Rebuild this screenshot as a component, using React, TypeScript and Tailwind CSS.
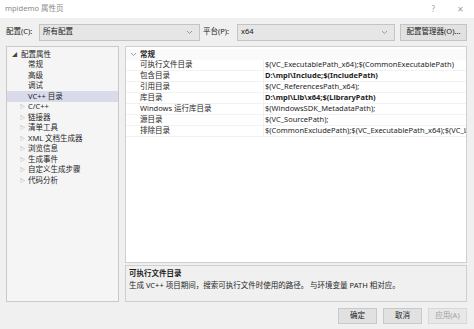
import React from "react";

const font = {
  fontFamily: '"Noto Sans", "Noto Sans CJK SC", sans-serif',
};

const tree = [
  { label: "常规", indent: true },
  { label: "高级", indent: true },
  { label: "调试", indent: true },
  { label: "VC++ 目录", indent: true, selected: true },
  { label: "C/C++" },
  { label: "链接器" },
  { label: "清单工具" },
  { label: "XML 文档生成器" },
  { label: "浏览信息" },
  { label: "生成事件" },
  { label: "自定义生成步骤" },
  { label: "代码分析" },
];

const rows = [
  { name: "可执行文件目录", value: "$(VC_ExecutablePath_x64);$(CommonExecutablePath)" },
  { name: "包含目录", value: "D:\\mpi\\Include;$(IncludePath)", bold: true },
  { name: "引用目录", value: "$(VC_ReferencesPath_x64);" },
  { name: "库目录", value: "D:\\mpi\\Lib\\x64;$(LibraryPath)", bold: true },
  { name: "Windows 运行库目录", value: "$(WindowsSDK_MetadataPath);" },
  { name: "源目录", value: "$(VC_SourcePath);" },
  { name: "排除目录", value: "$(CommonExcludePath);$(VC_ExecutablePath_x64);$(VC_LibraryPath_x64)" },
];

function Chevron() {
  return (
    <svg width="7" height="5" viewBox="0 0 7 5" className="shrink-0">
      <path d="M1 1 L3.5 3.5 L6 1" fill="none" stroke="#9a9a9a" strokeWidth="1" />
    </svg>
  );
}

function Select({ text, width }: { text: string; width: string }) {
  return (
    <div
      className={`${width} h-[17px] shrink-0 flex items-center justify-between border border-[#c4c4c4] bg-[#e6e6e6] pl-[3px] pr-[6px] text-[7.5px] text-[#1a1a1a]`}
    >
      <span>{text}</span>
      <Chevron />
    </div>
  );
}

function Btn({ text, disabled }: { text: string; disabled?: boolean }) {
  return (
    <div
      className={`w-[39px] h-[16px] flex items-center justify-center border text-[7.5px] ${
        disabled
          ? "border-[#d8d8d8] bg-[#e8e8e8] text-[#a0a0a0]"
          : "border-[#c8c8c8] bg-[#e1e1e1] text-[#1a1a1a]"
      }`}
    >
      {text}
    </div>
  );
}

export default function App() {
  return (
    <div className="w-[474px] h-[329px] bg-[#f0f0f0] overflow-hidden flex flex-col" style={font}>
      {/* title bar */}
      <div className="h-[18px] shrink-0 bg-white flex items-center justify-between pl-[5px] pr-[10px] text-[7.5px] text-[#8a8a8a]">
        <span>mpidemo 属性页</span>
        <div className="flex items-center gap-[22px] text-[8px] text-[#a0a0a0]">
          <span>?</span>
          <span>✕</span>
        </div>
      </div>

      {/* toolbar */}
      <div className="h-[28px] shrink-0 flex items-center pl-[6px] pr-[7px] text-[7.5px] text-[#1a1a1a]">
        <span className="w-[33px] shrink-0">配置(C):</span>
        <Select text="所有配置" width="w-[161px]" />
        <span className="ml-[3px] w-[34px] shrink-0">平台(P):</span>
        <Select text="x64" width="w-[158px]" />
        <div className="ml-[5px] w-[67px] h-[17px] shrink-0 flex items-center justify-center border border-[#c4c4c4] bg-[#e1e1e1]">
          配置管理器(O)...
        </div>
      </div>

      {/* main */}
      <div className="h-[256px] shrink-0 flex pl-[6px] pr-[7px] gap-[6px]">
        {/* tree */}
        <div className="w-[113px] shrink-0 h-[256px] border border-[#c9c9c9] bg-[#f5f5f5] pt-[2px] text-[7.5px] text-[#1e1e1e] whitespace-nowrap">
          <div className="h-[10.5px] flex items-center pl-[5px]">
            <span className="text-[5px] text-[#444] w-[9px]">◢</span>
            <span>配置属性</span>
          </div>
          {tree.map((t) => (
            <div
              key={t.label}
              className={`h-[10.5px] flex items-center ${t.selected ? "bg-[#d9dbea]" : ""} ${
                t.indent ? "pl-[21px]" : "pl-[13px]"
              }`}
            >
              {!t.indent && <span className="text-[5px] text-[#777] w-[8px]">▷</span>}
              <span>{t.label}</span>
            </div>
          ))}
        </div>

        {/* right */}
        <div className="flex-1 min-w-0 flex flex-col gap-[2px]">
          <div className="h-[217px] shrink-0 border border-[#cfcfcf] bg-white text-[7.5px] text-[#1e1e1e] overflow-hidden">
            <div className="h-[11px] mt-[2px] flex items-center pl-[4px] bg-[#fafafa]">
              <span className="w-[10px] flex">
                <Chevron />
              </span>
              <span className="font-bold">常规</span>
            </div>
            {rows.map((r) => (
              <div key={r.name} className="h-[11px] flex items-center border-b border-[#f2f2f2]">
                <div className="w-[138px] shrink-0 pl-[14px] whitespace-nowrap border-r border-[#f0f0f0] h-full flex items-center">
                  {r.name}
                </div>
                <div className={`pl-[1px] whitespace-nowrap ${r.bold ? "font-bold" : ""}`}>{r.value}</div>
              </div>
            ))}
          </div>
          <div className="h-[37px] shrink-0 border border-[#cfcfcf] bg-[#f0f0f0] px-[3px] pt-[1px] text-[7.5px] text-[#1e1e1e]">
            <div className="font-bold leading-[12px]">可执行文件目录</div>
            <div className="leading-[12px]">生成 VC++ 项目期间，搜索可执行文件时使用的路径。 与环境变量 PATH 相对应。</div>
          </div>
        </div>
      </div>

      {/* footer buttons */}
      <div className="flex-1 flex items-center justify-end gap-[6px] pr-[7px]">
        <Btn text="确定" />
        <Btn text="取消" />
        <Btn text="应用(A)" disabled />
      </div>
    </div>
  );
}
